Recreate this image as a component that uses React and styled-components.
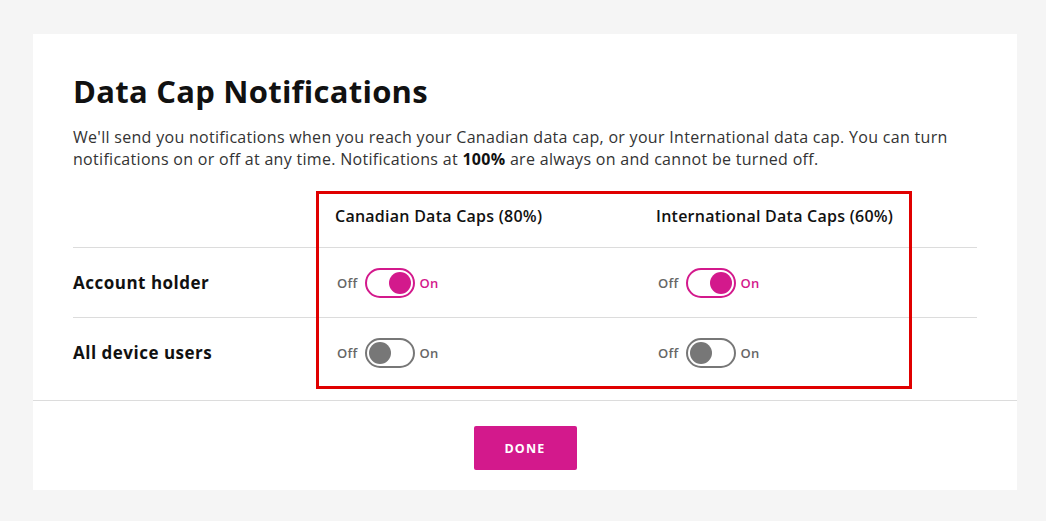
import React, { useState } from "react";
import styled, { createGlobalStyle } from "styled-components";

const GlobalStyle = createGlobalStyle`
  body {
    margin: 0;
    background: #f5f5f5;
    font-family: "Open Sans", "DejaVu Sans", sans-serif;
    color: #111;
  }
`;

const PINK = "#d3198c";

const Card = styled.div`
  background: #fff;
  margin: 34px 29px 31px 33px;
  height: 456px;
  display: flex;
  flex-direction: column;
`;

const Body = styled.div`
  padding: 39px 40px 0 40px;
  flex: 1;
`;

const Title = styled.h1`
  margin: 0;
  font-size: 31px;
  line-height: 36px;
  font-weight: 700;
  letter-spacing: 0.25px;
  color: #111;
`;

const Intro = styled.p`
  margin: 17px 0 0 0;
  font-size: 16px;
  line-height: 22px;
  letter-spacing: 0.3px;
  color: #333;

  b {
    color: #111;
    font-weight: 700;
  }
`;

const Table = styled.div`
  position: relative;
  margin-top: 15px;
`;

const Row = styled.div`
  display: grid;
  grid-template-columns: 262px 321px 1fr;
  align-items: center;
  height: ${(p) => p.$h}px;
  border-bottom: ${(p) => (p.$line ? "1px solid #dcdcdc" : "none")};
`;

const ColHead = styled.div`
  font-size: 16px;
  font-weight: 600;
  letter-spacing: 0.25px;
  color: #111;
`;

const RowLabel = styled.div`
  font-size: 17px;
  font-weight: 700;
  letter-spacing: 0.5px;
  color: #111;
`;

const Highlight = styled.div`
  position: absolute;
  left: 243px;
  top: 6px;
  width: 590px;
  height: 192px;
  border: 3px solid #e00000;
  pointer-events: none;
`;

const ToggleWrap = styled.div`
  display: flex;
  align-items: center;
  padding-left: 2px;
`;

const StateText = styled.span`
  font-size: 13px;
  font-weight: 600;
  letter-spacing: 0.3px;
  color: ${(p) => (p.$active ? PINK : "#666")};
`;

const Switch = styled.button`
  position: relative;
  width: 50px;
  height: 30px;
  margin: 0 5px 0 7px;
  padding: 0;
  border-radius: 15px;
  border: 2px solid ${(p) => (p.$on ? PINK : "#777")};
  background: #fff;
  cursor: pointer;

  &::after {
    content: "";
    position: absolute;
    top: 2px;
    left: ${(p) => (p.$on ? "22px" : "2px")};
    width: 22px;
    height: 22px;
    border-radius: 50%;
    background: ${(p) => (p.$on ? PINK : "#777")};
  }
`;

const Footer = styled.div`
  border-top: 1px solid #dcdcdc;
  display: flex;
  justify-content: center;
  padding: 25px 0 20px;
`;

const DoneButton = styled.button`
  width: 103px;
  height: 44px;
  border: none;
  border-radius: 2px;
  background: ${PINK};
  color: #fff;
  font-family: inherit;
  font-size: 12.5px;
  font-weight: 700;
  letter-spacing: 1.2px;
  cursor: pointer;
`;

function Toggle({ on, onChange }) {
  return (
    <ToggleWrap>
      <StateText>Off</StateText>
      <Switch $on={on} onClick={() => onChange(!on)} aria-pressed={on} />
      <StateText $active={on}>On</StateText>
    </ToggleWrap>
  );
}

export default function App() {
  const [state, setState] = useState({
    holderCa: true,
    holderIntl: true,
    usersCa: false,
    usersIntl: false,
  });

  const set = (key) => (value) => setState((s) => ({ ...s, [key]: value }));

  return (
    <>
      <GlobalStyle />
      <Card>
        <Body>
          <Title>Data Cap Notifications</Title>
          <Intro>
            We'll send you notifications when you reach your Canadian data cap,
            or your International data cap. You can turn notifications on or off
            at any time. Notifications at <b>100%</b> are always on and cannot be
            turned off.
          </Intro>
          <Table>
            <Row $h={62} $line>
              <div />
              <ColHead>Canadian Data Caps (80%)</ColHead>
              <ColHead>International Data Caps (60%)</ColHead>
            </Row>
            <Row $h={69} $line>
              <RowLabel>Account holder</RowLabel>
              <Toggle on={state.holderCa} onChange={set("holderCa")} />
              <Toggle on={state.holderIntl} onChange={set("holderIntl")} />
            </Row>
            <Row $h={69}>
              <RowLabel>All device users</RowLabel>
              <Toggle on={state.usersCa} onChange={set("usersCa")} />
              <Toggle on={state.usersIntl} onChange={set("usersIntl")} />
            </Row>
            <Highlight />
          </Table>
        </Body>
        <Footer>
          <DoneButton>DONE</DoneButton>
        </Footer>
      </Card>
    </>
  );
}
